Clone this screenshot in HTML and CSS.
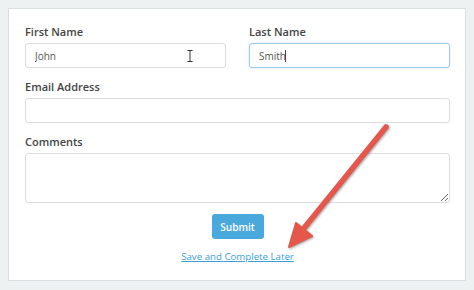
FILE: index.html
```html
<!DOCTYPE html>
<html lang="en">
<head>
  <meta charset="UTF-8">
  <meta name="viewport" content="width=device-width, initial-scale=1.0">
  <title>Contact Form</title>
  <link rel="stylesheet" href="styles.css">
</head>
<body>
  <div class="card">
    <div class="row">
      <div class="field">
        <label for="first">First Name</label>
        <input type="text" id="first" value="John">
      </div>
      <div class="field">
        <label for="last">Last Name</label>
        <input type="text" id="last" class="focused" value="Smith">
      </div>
    </div>

    <div class="field">
      <label for="email">Email Address</label>
      <input type="text" id="email">
    </div>

    <div class="field">
      <label for="comments">Comments</label>
      <textarea id="comments"></textarea>
    </div>

    <div class="actions">
      <button type="button">Submit</button>
      <a href="#" class="later">Save and Complete Later</a>
    </div>
  </div>

  <!-- annotation: mouse cursor, text caret and the red arrow -->
  <svg class="overlay" width="474" height="290" viewBox="0 0 474 290">
    <g stroke="#333" stroke-width="1" fill="none">
      <path d="M187.5 50.5h5M190 50.5v11M187.5 61.5h5"/>
    </g>
    <path d="M285.5 50v12" stroke="#444" stroke-width="1"/>
    <g class="arrow">
      <path d="M386 127L300 233" stroke="#e4574a" stroke-width="5.5" stroke-linecap="round"/>
      <path d="M289 247L296 223L312 236Z" fill="#e4574a" stroke="#e4574a" stroke-width="2" stroke-linejoin="round"/>
    </g>
  </svg>
</body>
</html>
```

FILE: styles.css
```css
body {
  margin: 8px;
  background-color: #eef1f2;
  font-family: "Open Sans", Arial, sans-serif;
  color: #444;
}
.card {
  background-color: #fff;
  border: 1px solid #d9dee0;
  box-shadow: 0 1px 1px rgba(0, 0, 0, 0.06);
  padding: 16px 15px 14px 16px;
  height: 241px;
}
.row {
  display: flex;
  gap: 23px;
}
.row .field {
  flex: 1;
}
.field {
  margin-bottom: 12px;
}
.field label {
  display: block;
  font-size: 11px;
  font-weight: 600;
  line-height: 14px;
  margin-bottom: 4px;
  color: #444;
}
.field input,
.field textarea {
  display: block;
  box-sizing: border-box;
  width: 100%;
  height: 25px;
  padding: 0 9px;
  border: 1px solid #dcdcdc;
  border-radius: 3px;
  font-family: "Open Sans", Arial, sans-serif;
  font-size: 10px;
  color: #555;
  background-color: #fff;
  outline: none;
}
.field input.focused {
  border-color: #9fcde2;
  box-shadow: 0 0 2px rgba(120, 190, 220, 0.5);
}
.field textarea {
  height: 50px;
  resize: vertical;
}
.actions {
  display: flex;
  flex-direction: column;
  align-items: center;
  margin-top: -1px;
}
button {
  width: 52px;
  height: 25px;
  padding: 0;
  font-family: "Open Sans", Arial, sans-serif;
  font-size: 10px;
  font-weight: 600;
  color: #fff;
  background-color: #4aa9dc;
  border: none;
  border-radius: 3px;
  cursor: pointer;
}
.later {
  margin-top: 11px;
  font-size: 9.7px;
  line-height: 14px;
  color: #3b9fd8;
  text-decoration: underline;
}
.overlay {
  position: absolute;
  left: 0;
  top: 0;
  pointer-events: none;
}
.arrow {
  filter: drop-shadow(1px 1px 1px rgba(0, 0, 0, 0.35));
}
```
